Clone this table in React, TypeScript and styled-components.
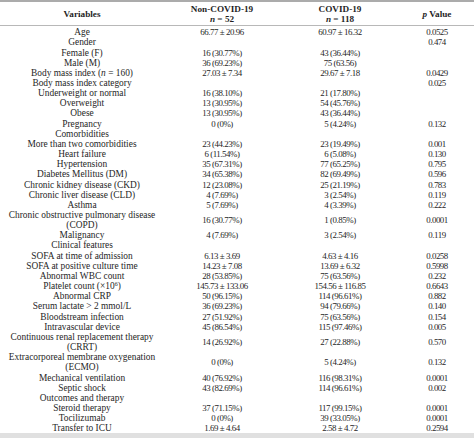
import React from "react";
import styled, { createGlobalStyle } from "styled-components";

const Global = createGlobalStyle`
  html, body { margin: 0; padding: 0; background: #ffffff; }
  body { width: 474px; height: 439px; overflow: hidden; }
`;

/* column centres at 82, 222, 340, 437 */
const COLS = "164px 116px 120px 74px";

const Table = styled.div`
  width: 474px;
  border-top: 2.5px solid #ababab;
  border-bottom: 5px solid #e0e0e0;
  font-family: "Liberation Serif", "Times New Roman", serif;
  font-size: 9.4px;
  color: #262626;
`;

const HeadRow = styled.div`
  display: grid;
  grid-template-columns: ${COLS};
  align-items: center;
  height: 23px;
  border-bottom: 1px solid #b8b8b8;
  font-weight: bold;
  font-size: 9.2px;
  letter-spacing: -0.25px;
  line-height: 10px;
  color: #1f1f1f;
`;

const Body = styled.div`
  padding-top: 1.2px;
`;

const Row = styled.div`
  display: grid;
  grid-template-columns: ${COLS};
  align-items: center;
  line-height: 10.16px;
`;

const Cell = styled.div<{ $num?: boolean }>`
  display: flex;
  flex-direction: column;
  align-items: center;
  justify-content: center;
  white-space: nowrap;
  font-size: ${(p) => (p.$num ? "8.9px" : "inherit")};
  letter-spacing: ${(p) => (p.$num ? "-0.45px" : "normal")};
`;

const Line = styled.span`
  display: block;
`;

const Sup = styled.sup`
  font-size: 6px;
  line-height: 0;
  vertical-align: 3px;
`;

type R = { label: React.ReactNode[]; a?: string; b?: string; p?: string };

const rows: R[] = [
  { label: ["Age"], a: "66.77 ± 20.96", b: "60.97 ± 16.32", p: "0.0525" },
  { label: ["Gender"], p: "0.474" },
  { label: ["Female (F)"], a: "16 (30.77%)", b: "43 (36.44%)" },
  { label: ["Male (M)"], a: "36 (69.23%)", b: "75 (63.56)" },
  { label: [<>Body mass index (<i>n</i> = 160)</>], a: "27.03 ± 7.34", b: "29.67 ± 7.18", p: "0.0429" },
  { label: ["Body mass index category"], p: "0.025" },
  { label: ["Underweight or normal"], a: "16 (38.10%)", b: "21 (17.80%)" },
  { label: ["Overweight"], a: "13 (30.95%)", b: "54 (45.76%)" },
  { label: ["Obese"], a: "13 (30.95%)", b: "43 (36.44%)" },
  { label: ["Pregnancy"], a: "0 (0%)", b: "5 (4.24%)", p: "0.132" },
  { label: ["Comorbidities"] },
  { label: ["More than two comorbidities"], a: "23 (44.23%)", b: "23 (19.49%)", p: "0.001" },
  { label: ["Heart failure"], a: "6 (11.54%)", b: "6 (5.08%)", p: "0.130" },
  { label: ["Hypertension"], a: "35 (67.31%)", b: "77 (65.25%)", p: "0.795" },
  { label: ["Diabetes Mellitus (DM)"], a: "34 (65.38%)", b: "82 (69.49%)", p: "0.596" },
  { label: ["Chronic kidney disease (CKD)"], a: "12 (23.08%)", b: "25 (21.19%)", p: "0.783" },
  { label: ["Chronic liver disease (CLD)"], a: "4 (7.69%)", b: "3 (2.54%)", p: "0.119" },
  { label: ["Asthma"], a: "5 (7.69%)", b: "4 (3.39%)", p: "0.222" },
  { label: ["Chronic obstructive pulmonary disease", "(COPD)"], a: "16 (30.77%)", b: "1 (0.85%)", p: "0.0001" },
  { label: ["Malignancy"], a: "4 (7.69%)", b: "3 (2.54%)", p: "0.119" },
  { label: ["Clinical features"] },
  { label: ["SOFA at time of admission"], a: "6.13 ± 3.69", b: "4.63 ± 4.16", p: "0.0258" },
  { label: ["SOFA at positive culture time"], a: "14.23 ± 7.08", b: "13.69 ± 6.32", p: "0.5998" },
  { label: ["Abnormal WBC count"], a: "28 (53.85%)", b: "75 (63.56%)", p: "0.232" },
  { label: [<>Platelet count (×10<Sup>6</Sup>)</>], a: "145.73 ± 133.06", b: "154.56 ± 116.85", p: "0.6643" },
  { label: ["Abnormal CRP"], a: "50 (96.15%)", b: "114 (96.61%)", p: "0.882" },
  { label: ["Serum lactate > 2 mmol/L"], a: "36 (69.23%)", b: "94 (79.66%)", p: "0.140" },
  { label: ["Bloodstream infection"], a: "27 (51.92%)", b: "75 (63.56%)", p: "0.154" },
  { label: ["Intravascular device"], a: "45 (86.54%)", b: "115 (97.46%)", p: "0.005" },
  { label: ["Continuous renal replacement therapy", "(CRRT)"], a: "14 (26.92%)", b: "27 (22.88%)", p: "0.570" },
  { label: ["Extracorporeal membrane oxygenation", "(ECMO)"], a: "0 (0%)", b: "5 (4.24%)", p: "0.132" },
  { label: ["Mechanical ventilation"], a: "40 (76.92%)", b: "116 (98.31%)", p: "0.0001" },
  { label: ["Septic shock"], a: "43 (82.69%)", b: "114 (96.61%)", p: "0.002" },
  { label: ["Outcomes and therapy"] },
  { label: ["Steroid therapy"], a: "37 (71.15%)", b: "117 (99.15%)", p: "0.0001" },
  { label: ["Tocilizumab"], a: "0 (0%)", b: "39 (33.05%)", p: "0.0001" },
  { label: ["Transfer to ICU"], a: "1.69 ± 4.64", b: "2.58 ± 4.72", p: "0.2594" },
];

export default function App() {
  return (
    <>
      <Global />
      <Table>
        <HeadRow>
          <Cell><Line>Variables</Line></Cell>
          <Cell>
            <Line>Non-COVID-19</Line>
            <Line><i>n</i> = 52</Line>
          </Cell>
          <Cell>
            <Line>COVID-19</Line>
            <Line><i>n</i> = 118</Line>
          </Cell>
          <Cell><Line><i>p</i> Value</Line></Cell>
        </HeadRow>
        <Body>
          {rows.map((r, i) => (
            <Row key={i}>
              <Cell>
                {r.label.map((l, j) => (
                  <Line key={j}>{l}</Line>
                ))}
              </Cell>
              <Cell $num><Line>{r.a ?? ""}</Line></Cell>
              <Cell $num><Line>{r.b ?? ""}</Line></Cell>
              <Cell $num><Line>{r.p ?? ""}</Line></Cell>
            </Row>
          ))}
        </Body>
      </Table>
    </>
  );
}
